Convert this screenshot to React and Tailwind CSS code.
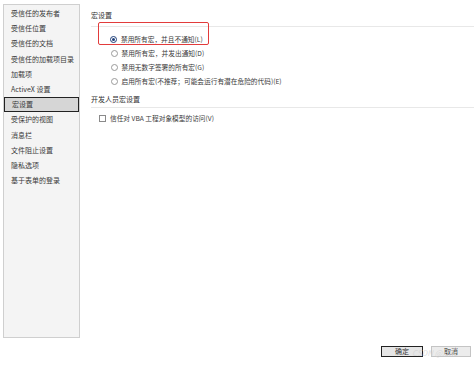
const navItems = [
  '受信任的发布者',
  '受信任位置',
  '受信任的文档',
  '受信任的加载项目录',
  '加载项',
  'ActiveX 设置',
  '宏设置',
  '受保护的视图',
  '消息栏',
  '文件阻止设置',
  '隐私选项',
  '基于表单的登录',
];

const macroOptions = [
  '禁用所有宏，并且不通知(L)',
  '禁用所有宏，并发出通知(D)',
  '禁用无数字签署的所有宏(G)',
  '启用所有宏(不推荐；可能会运行有潜在危险的代码)(E)',
];

function Radio({ checked }) {
  return (
    <span
      className={
        'flex h-[7px] w-[7px] shrink-0 items-center justify-center rounded-full border ' +
        (checked ? 'border-[#1e3f7a] bg-white' : 'border-[#9a9a9a] bg-white')
      }
    >
      {checked && <span className="h-[3px] w-[3px] rounded-full bg-[#1e3f7a]" />}
    </span>
  );
}

export default function App() {
  const selected = '宏设置';
  const checked = 0;

  return (
    <div
      className="relative flex h-[365px] w-[474px] flex-col overflow-hidden bg-white text-[7px] leading-none text-[#3a3a3a]"
      style={{ fontFamily: '"Noto Sans CJK SC", "Noto Sans", sans-serif' }}
    >
      <div className="flex h-[338px] pt-[4px]">
        {/* SIDEBAR */}
        <nav className="ml-[3px] flex h-[334px] w-[77px] flex-col border border-[#cfcfcf] bg-[#f4f4f4] pt-[1px]">
          {navItems.map((item) => (
            <div
              key={item}
              className={
                'flex h-[15.2px] shrink-0 items-center pl-[7px] ' +
                (item === selected
                  ? 'border-[1.5px] border-[#222] bg-[#d6d6d6] pl-[5.5px]'
                  : '')
              }
            >
              {item}
            </div>
          ))}
        </nav>

        {/* CONTENT */}
        <main className="flex flex-1 flex-col pl-[11px] pt-[8px] text-[6.7px]">
          <h2 className="h-[14px] text-[7px] text-[#333]">宏设置</h2>
          <div className="h-px bg-[#e8e8e8]" />

          <div className="ml-[7px] mt-[-5px] flex flex-col">
            <div className="flex h-[23px] w-[111px] items-center rounded-[2px] border-[1.5px] border-[#e23b3b] pl-[11px] pt-[11px]">
              <div className="flex items-center gap-[4px]">
                <Radio checked={checked === 0} />
                <span>{macroOptions[0]}</span>
              </div>
            </div>
            {macroOptions.slice(1).map((opt, i) => (
              <div key={opt} className="flex h-[14px] items-center gap-[4px] pl-[12.5px] pt-[2px]">
                <Radio checked={checked === i + 1} />
                <span>{opt}</span>
              </div>
            ))}
          </div>

          <h2 className="mt-[9px] h-[11px] text-[7px] text-[#333]">开发人员宏设置</h2>
          <div className="h-px bg-[#e8e8e8]" />
          <label className="ml-[8px] mt-[7px] flex items-center gap-[4px]">
            <span className="h-[7px] w-[7px] shrink-0 border border-[#8a8a8a] bg-white" />
            <span>信任对 VBA 工程对象模型的访问(V)</span>
          </label>
        </main>
      </div>

      {/* FOOTER */}
      <div className="flex justify-end gap-[8px] pr-[3px] pt-[8px]">
        <button className="flex h-[11px] w-[42px] items-center justify-center border-[1.5px] border-[#222] bg-[#e6e6e6] text-[7px] text-[#333]">
          确定
        </button>
        <button className="flex h-[11px] w-[40px] items-center justify-center border border-[#c4c4c4] bg-[#ececec] text-[7px] text-[#444]">
          取消
        </button>
      </div>

      {/* watermark */}
      <span className="pointer-events-none absolute left-[412px] top-[349px] text-[8px] italic text-[#d0d0d0]/70">
        CSDN @xinc
      </span>
    </div>
  );
}
